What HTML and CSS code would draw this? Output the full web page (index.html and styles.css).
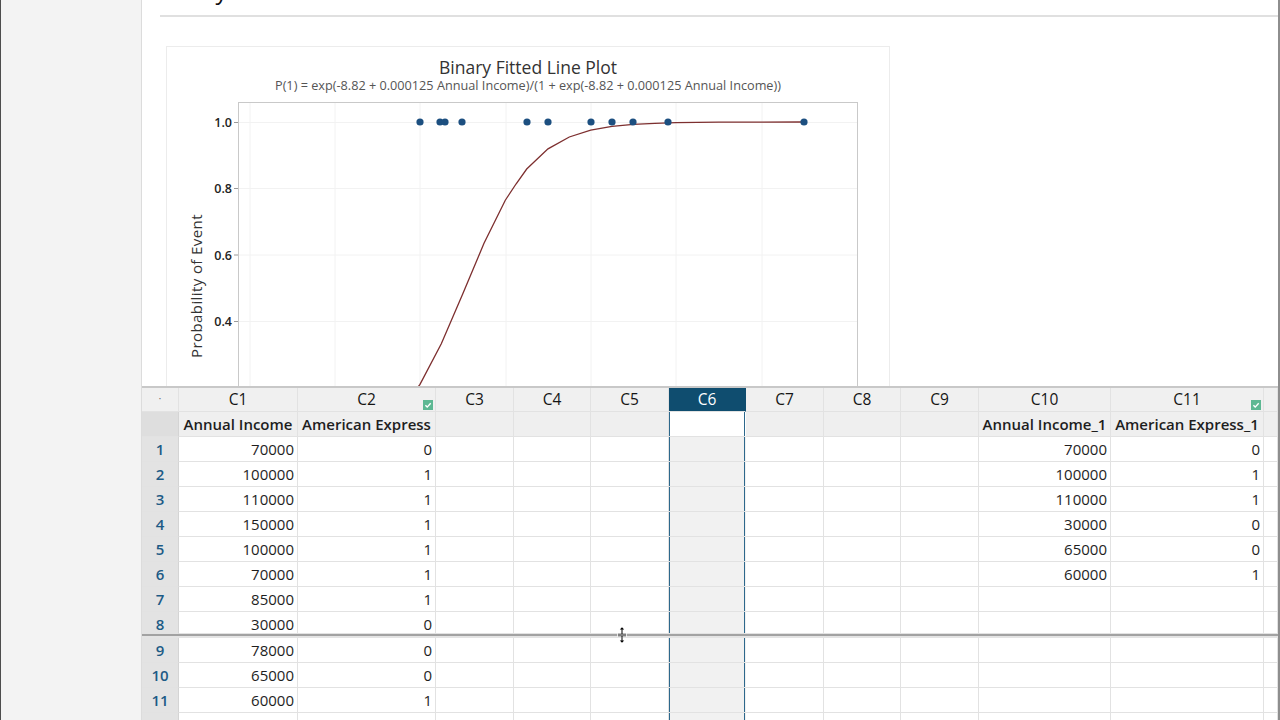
FILE: index.html
```html
<!DOCTYPE html>
<html lang="en">
<head>
<meta charset="utf-8">
<title>Binary Fitted Line Plot - Worksheet</title>
<link rel="stylesheet" href="styles.css">
</head>
<body>
<div class="app">
  <aside class="sidebar"></aside>
  <main class="main">
    <section class="output">
      <div class="heading-bar"><h1 class="heading">Binary Fitted Line Plot</h1></div>
      <div class="card">
        <div class="chart-title">Binary Fitted Line Plot</div>
        <div class="chart-sub">P(1) = exp(-8.82 + 0.000125 Annual Income)/(1 + exp(-8.82 + 0.000125 Annual Income))</div>
        <svg class="plot" width="722" height="400" viewBox="167 92 722 400">
          <rect x="238.5" y="103.5" width="619" height="380" fill="#fff" stroke="#c9c9c9"/>
          <g stroke="#f2f2f2" stroke-width="1">
            <line x1="250" y1="104" x2="250" y2="483"/>
            <line x1="335" y1="104" x2="335" y2="483"/>
            <line x1="420" y1="104" x2="420" y2="483"/>
            <line x1="506" y1="104" x2="506" y2="483"/>
            <line x1="591" y1="104" x2="591" y2="483"/>
            <line x1="676" y1="104" x2="676" y2="483"/>
            <line x1="762" y1="104" x2="762" y2="483"/>
            <line x1="239" y1="123.5" x2="857" y2="123.5"/>
            <line x1="239" y1="189.5" x2="857" y2="189.5"/>
            <line x1="239" y1="256" x2="857" y2="256"/>
            <line x1="239" y1="322.5" x2="857" y2="322.5"/>
          </g>
          <g stroke="#9a9a9a">
            <line x1="234" y1="123.5" x2="238" y2="123.5"/>
            <line x1="234" y1="189.5" x2="238" y2="189.5"/>
            <line x1="234" y1="256" x2="238" y2="256"/>
            <line x1="234" y1="322.5" x2="238" y2="322.5"/>
          </g>
          <g class="ytick" text-anchor="end">
            <text x="232" y="128">1.0</text>
            <text x="232" y="194">0.8</text>
            <text x="232" y="260.5">0.6</text>
            <text x="232" y="327">0.4</text>
          </g>
          <text class="ylabel" x="0" y="0" text-anchor="middle" transform="translate(202 287) rotate(-90)">Probability of Event</text>
          <polyline fill="none" stroke="#7d2f2f" stroke-width="1.3" points="292,453.4 313.3,451.6 334.7,448.3 356,442.5 377.3,431.9 398.7,413.9 420,385.4 441.3,344.8 462.7,295.1 484,244.3 505.3,201.2 516,185 526.7,170 548,149.9 569.3,138 590.7,131.2 612,127.4 633.4,125.4 654.7,124.3 676,123.7 718.7,123.2 761.4,123.05 804,123"/>
          <g fill="#1c4f80">
            <circle cx="420" cy="123" r="3.6"/>
            <circle cx="440" cy="123" r="3.6"/>
            <circle cx="445" cy="123" r="3.6"/>
            <circle cx="462" cy="123" r="3.6"/>
            <circle cx="527" cy="123" r="3.6"/>
            <circle cx="548" cy="123" r="3.6"/>
            <circle cx="591" cy="123" r="3.6"/>
            <circle cx="612" cy="123" r="3.6"/>
            <circle cx="633" cy="123" r="3.6"/>
            <circle cx="668" cy="123" r="3.6"/>
            <circle cx="804" cy="123" r="3.6"/>
          </g>
        </svg>
      </div>
    </section>

    <section class="sheet">
      <div class="row hdr">
        <div class="c corner">·</div>
        <div class="c">C1</div>
        <div class="c">C2<svg class="check" viewBox="0 0 10 10"><rect width="10" height="10" fill="#5db893"/><path d="M2.4 5.3 L4.2 7.1 L7.7 3.2" stroke="#fff" stroke-width="1.4" fill="none"/></svg></div>
        <div class="c">C3</div>
        <div class="c">C4</div>
        <div class="c">C5</div>
        <div class="c sel-h">C6</div>
        <div class="c">C7</div>
        <div class="c">C8</div>
        <div class="c">C9</div>
        <div class="c">C10</div>
        <div class="c">C11<svg class="check" viewBox="0 0 10 10"><rect width="10" height="10" fill="#5db893"/><path d="M2.4 5.3 L4.2 7.1 L7.7 3.2" stroke="#fff" stroke-width="1.4" fill="none"/></svg></div>
        <div class="c"></div>
      </div>
      <div class="row names">
        <div class="c rh"></div>
        <div class="c">Annual Income</div>
        <div class="c">American Express</div>
        <div class="c"></div><div class="c"></div><div class="c"></div>
        <div class="c sel active"></div>
        <div class="c"></div><div class="c"></div><div class="c"></div>
        <div class="c">Annual Income_1</div>
        <div class="c">American Express_1</div>
        <div class="c"></div>
      </div>
      <div class="row">
        <div class="c rh">1</div><div class="c n">70000</div><div class="c n">0</div>
        <div class="c"></div><div class="c"></div><div class="c"></div><div class="c sel"></div><div class="c"></div><div class="c"></div><div class="c"></div>
        <div class="c n">70000</div><div class="c n">0</div><div class="c"></div>
      </div>
      <div class="row">
        <div class="c rh">2</div><div class="c n">100000</div><div class="c n">1</div>
        <div class="c"></div><div class="c"></div><div class="c"></div><div class="c sel"></div><div class="c"></div><div class="c"></div><div class="c"></div>
        <div class="c n">100000</div><div class="c n">1</div><div class="c"></div>
      </div>
      <div class="row">
        <div class="c rh">3</div><div class="c n">110000</div><div class="c n">1</div>
        <div class="c"></div><div class="c"></div><div class="c"></div><div class="c sel"></div><div class="c"></div><div class="c"></div><div class="c"></div>
        <div class="c n">110000</div><div class="c n">1</div><div class="c"></div>
      </div>
      <div class="row">
        <div class="c rh">4</div><div class="c n">150000</div><div class="c n">1</div>
        <div class="c"></div><div class="c"></div><div class="c"></div><div class="c sel"></div><div class="c"></div><div class="c"></div><div class="c"></div>
        <div class="c n">30000</div><div class="c n">0</div><div class="c"></div>
      </div>
      <div class="row">
        <div class="c rh">5</div><div class="c n">100000</div><div class="c n">1</div>
        <div class="c"></div><div class="c"></div><div class="c"></div><div class="c sel"></div><div class="c"></div><div class="c"></div><div class="c"></div>
        <div class="c n">65000</div><div class="c n">0</div><div class="c"></div>
      </div>
      <div class="row">
        <div class="c rh">6</div><div class="c n">70000</div><div class="c n">1</div>
        <div class="c"></div><div class="c"></div><div class="c"></div><div class="c sel"></div><div class="c"></div><div class="c"></div><div class="c"></div>
        <div class="c n">60000</div><div class="c n">1</div><div class="c"></div>
      </div>
      <div class="row">
        <div class="c rh">7</div><div class="c n">85000</div><div class="c n">1</div>
        <div class="c"></div><div class="c"></div><div class="c"></div><div class="c sel"></div><div class="c"></div><div class="c"></div><div class="c"></div>
        <div class="c"></div><div class="c"></div><div class="c"></div>
      </div>
      <div class="row short">
        <div class="c rh">8</div><div class="c n">30000</div><div class="c n">0</div>
        <div class="c"></div><div class="c"></div><div class="c"></div><div class="c sel"></div><div class="c"></div><div class="c"></div><div class="c"></div>
        <div class="c"></div><div class="c"></div><div class="c"></div>
      </div>
      <div class="split">
        <svg class="cursor" width="12" height="20" viewBox="0 0 12 20">
          <path d="M6 1 L2.5 5 H5 V8 H1 V12 H5 V15 H2.5 L6 19 L9.5 15 H7 V12 H11 V8 H7 V5 H9.5 Z" fill="#fff"/>
          <path d="M6 2.2 L3.8 4.6 H5.5 V8.8 H1.8 V9.6 H10.2 V8.8 H6.5 V4.6 H8.2 Z M1.8 10.4 V11.2 H5.5 V15.4 H3.8 L6 17.8 L8.2 15.4 H6.5 V11.2 H10.2 V10.4 Z" fill="#000"/>
        </svg>
      </div>
      <div class="row">
        <div class="c rh">9</div><div class="c n">78000</div><div class="c n">0</div>
        <div class="c"></div><div class="c"></div><div class="c"></div><div class="c sel"></div><div class="c"></div><div class="c"></div><div class="c"></div>
        <div class="c"></div><div class="c"></div><div class="c"></div>
      </div>
      <div class="row">
        <div class="c rh">10</div><div class="c n">65000</div><div class="c n">0</div>
        <div class="c"></div><div class="c"></div><div class="c"></div><div class="c sel"></div><div class="c"></div><div class="c"></div><div class="c"></div>
        <div class="c"></div><div class="c"></div><div class="c"></div>
      </div>
      <div class="row">
        <div class="c rh">11</div><div class="c n">60000</div><div class="c n">1</div>
        <div class="c"></div><div class="c"></div><div class="c"></div><div class="c sel"></div><div class="c"></div><div class="c"></div><div class="c"></div>
        <div class="c"></div><div class="c"></div><div class="c"></div>
      </div>
      <div class="row">
        <div class="c rh"></div><div class="c"></div><div class="c"></div>
        <div class="c"></div><div class="c"></div><div class="c"></div><div class="c sel"></div><div class="c"></div><div class="c"></div><div class="c"></div>
        <div class="c"></div><div class="c"></div><div class="c"></div>
      </div>
    </section>
  </main>
</div>
</body>
</html>
```
FILE: styles.css
```css
* { box-sizing: border-box; }
html, body { margin: 0; padding: 0; }
body {
  width: 1280px;
  height: 720px;
  overflow: hidden;
  background: #fff;
  font-family: "Open Sans", "Noto Sans", sans-serif;
  color: #222;
}
.app { display: flex; height: 720px; }

.sidebar {
  width: 142px;
  flex: none;
  background: #f3f3f3;
  border-left: 1px solid #4d4d4d;
  border-right: 1px solid #dcdcdc;
}

.main {
  flex: 1;
  display: flex;
  flex-direction: column;
  min-width: 0;
  border-right: 2px solid #8e8e8e;
}

.output {
  height: 386px;
  flex: none;
  overflow: hidden;
}

.heading-bar {
  display: flow-root;
  margin-left: 18px;
  height: 17px;
  border-bottom: 2px solid #e0e0e0;
}
.heading {
  margin: -24px 0 0 -4px;
  font-size: 24px;
  font-weight: 400;
  line-height: 28px;
  color: #111;
  white-space: nowrap;
}

.card {
  margin: 29px 0 0 24px;
  width: 724px;
  height: 520px;
  border: 1px solid #ececec;
  background: #fff;
}
.chart-title {
  padding-top: 10px;
  text-align: center;
  font-size: 17.5px;
  line-height: 21px;
  color: #333;
}
.chart-sub {
  text-align: center;
  font-size: 12.7px;
  line-height: 14px;
  margin-top: 0;
  color: #555;
}
.plot { display: block; margin-top: -1px; }
.ytick text {
  font-family: "Open Sans", sans-serif;
  font-size: 12.5px;
  font-weight: 600;
  fill: #222;
}
.ylabel {
  font-family: "Open Sans", sans-serif;
  font-size: 15px;
  letter-spacing: 0.4px;
  fill: #333;
}

.sheet {
  flex: 1;
  overflow: hidden;
  border-top: 2px solid #c8c8c8;
}
.row {
  display: grid;
  grid-template-columns: 37px 119px 138px 78px 77px 78px 77px 78px 77px 78px 132px 153px 1fr;
  height: 25px;
}
.row.hdr { height: 24px; }
.row.short { height: 22px; }

.c {
  position: relative;
  border-right: 1px solid #e2e2e2;
  border-bottom: 1px solid #e2e2e2;
  padding: 0 3px;
  font-size: 15px;
  line-height: 24px;
  white-space: nowrap;
  overflow: hidden;
  color: #1e1e1e;
}
.c.n { text-align: right; }

.hdr .c {
  background: #f0f0f0;
  text-align: center;
  line-height: 23px;
  font-size: 15.5px;
  color: #151515;
}
.hdr .corner {
  background: #f0f0f0;
  color: #777;
  font-size: 11px;
  line-height: 20px;
}
.hdr .sel-h {
  background: #0f4d6f;
  color: #fff;
  border-right-color: #0f4d6f;
}
.check {
  position: absolute;
  right: 2px;
  bottom: 1px;
  width: 10px;
  height: 10px;
}

.names .c {
  background: #efefef;
  text-align: center;
  font-weight: 600;
  padding: 0 1px;
}
.c.rh {
  background: #e3e3e3;
  text-align: center;
  color: #1d5b86;
  font-weight: 600;
  border-right-color: #d4d4d4;
  padding: 0;
}
.names .c.rh { background: #dedede; }

.c.sel {
  background: #f1f1f1;
  box-shadow: inset 1px 0 #2d688c, inset -1px 0 #2d688c;
  border-right-color: transparent;
}
.names .c.sel.active { background: #fff; }

.split {
  position: relative;
  height: 4px;
  background: linear-gradient(#a2a2a2 0 2px, #e4e4e4 2px 4px);
}
.cursor {
  position: absolute;
  left: 474px;
  top: -9px;
}
```
